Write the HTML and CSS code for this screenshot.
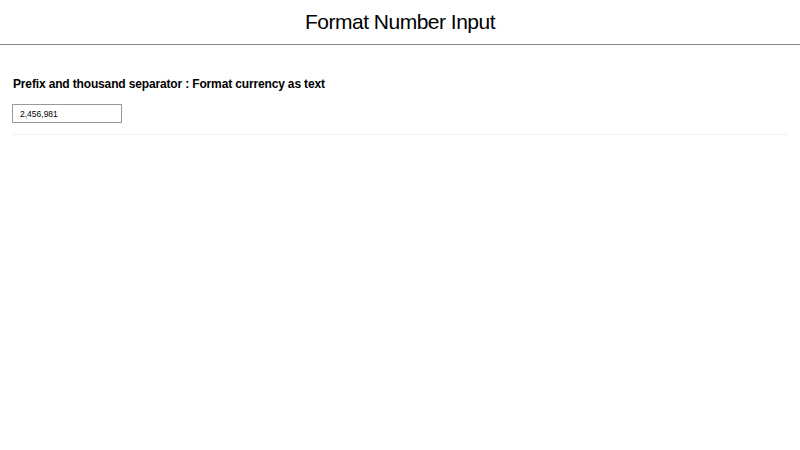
FILE: index.html
```html
<!DOCTYPE html>
<html>
<head>
<meta charset="utf-8">
<link rel="stylesheet" href="styles.css">
</head>
<body>
<header class="header">
  <h1 class="title">Format Number Input</h1>
</header>
<main class="content">
  <section class="example">
    <h3 class="example-title">Prefix and thousand separator : Format currency as text</h3>
    <input class="num-input" type="text" value="2,456,981">
  </section>
</main>
</body>
</html>
```
FILE: styles.css
```css
html, body {
  margin: 0;
  padding: 0;
  background: #fff;
  font-family: "Liberation Sans", Arial, sans-serif;
  color: #000;
}
.header {
  height: 44px;
  border-bottom: 1px solid #888;
  display: flex;
  align-items: center;
  justify-content: center;
}
.title {
  margin: 0;
  font-size: 21px;
  letter-spacing: -0.5px;
  font-weight: normal;
}
.content {
  padding: 0 13px 0 12px;
}
.example {
  padding-top: 32px;
  padding-bottom: 11px;
  border-bottom: 1px solid #f0f0f0;
}
.example-title {
  margin: 0 0 13px 1px;
  font-size: 12px;
  letter-spacing: -0.15px;
  font-weight: bold;
}
.num-input {
  display: block;
  box-sizing: border-box;
  width: 110px;
  height: 19px;
  margin: 0;
  padding: 1px 7px;
  border: 1px solid #999;
  font-family: "Liberation Sans", Arial, sans-serif;
  font-size: 8.5px;
  color: #000;
}
```
